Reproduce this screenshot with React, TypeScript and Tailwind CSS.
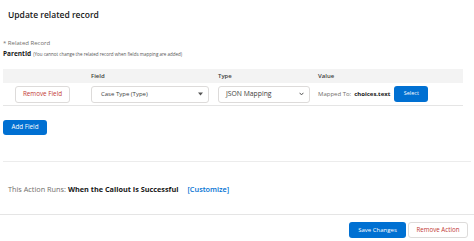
const blue = "bg-[#0070d2]";

function SelectBox({
  label,
  width,
  pad,
  size,
  chevron,
}: {
  label: string;
  width: string;
  pad: string;
  size: string;
  chevron: "triangle" | "chevron";
}) {
  return (
    <div
      className={`${width} ${pad} ${size} h-[17px] flex items-center justify-between border border-[#dddbda] rounded-[3px] bg-white pr-[5px] text-[#3e3e3c]`}
    >
      <span>{label}</span>
      {chevron === "triangle" ? (
        <svg width="5" height="4" viewBox="0 0 5 4">
          <path d="M0 0.5 L5 0.5 L2.5 3.5 Z" fill="#555" />
        </svg>
      ) : (
        <svg width="5" height="4" viewBox="0 0 5 4">
          <path d="M0.6 0.8 L2.5 2.9 L4.4 0.8" fill="none" stroke="#555" strokeWidth="1" />
        </svg>
      )}
    </div>
  );
}

export default function App() {
  return (
    <div
      className="w-[474px] h-[241px] bg-white overflow-hidden text-[#181818] leading-none"
      style={{ fontFamily: '"Open Sans", "Noto Sans", sans-serif' }}
    >
      {/* Header */}
      <div className="pt-[9px] pl-[8px] text-[8.5px] leading-[12px] font-semibold text-[#181818]">
        Update related record
      </div>

      <div className="mt-[18px] pl-[3px] text-[6px] leading-[8px] text-[#706e6b]">
        * Related Record
      </div>
      <div className="mt-[2px] pl-[3px] leading-[9px] flex items-baseline gap-[2px]">
        <span className="text-[6.5px] font-bold">ParentId</span>
        <span className="text-[4.5px] text-[#555]">(You cannot change the related record when fields mapping are added)</span>
      </div>

      {/* Mapping table */}
      <div className="mt-[10px] mx-[3px] w-[460px]">
        <div className="grid grid-cols-[87px_127px_101px_1fr] h-[14px] items-center bg-[#f3f3f3] text-[6px] font-semibold text-[#3e3e3c]">
          <span></span>
          <span className="pl-[1px]">Field</span>
          <span className="pl-[1px]">Type</span>
          <span>Value</span>
        </div>
        <div className="grid grid-cols-[87px_127px_101px_1fr] h-[23px] items-center border-b border-[#e5e5e5]">
          <div className="pl-[12px] flex">
            <button className="w-[55px] h-[17px] border border-[#dddbda] rounded-[3px] bg-white text-[6.3px] text-[#c23934]">
              Remove Field
            </button>
          </div>
          <div className="pl-[1px] flex">
            <SelectBox label="Case Type (Type)" width="w-[118px]" pad="pl-[9px]" size="text-[6px]" chevron="triangle" />
          </div>
          <div className="pl-[1px] flex">
            <SelectBox label="JSON Mapping" width="w-[92px]" pad="pl-[7px]" size="text-[6.8px]" chevron="chevron" />
          </div>
          <div className="flex items-center text-[6px]">
            <span className="text-[#706e6b]">Mapped To:</span>
            <span className="ml-[3px] font-bold text-[#181818]">choices.text</span>
            <button className={`ml-[4px] w-[34px] h-[16px] ${blue} rounded-[3px] text-white text-[5.5px]`}>
              Select
            </button>
          </div>
        </div>
      </div>

      <div className="mt-[14px] pl-[3px] flex">
        <button className={`w-[44px] h-[15px] ${blue} rounded-[3px] text-white text-[6.3px]`}>Add Field</button>
      </div>

      <div className="mt-[26px] mx-[3px] border-t border-[#ececec]"></div>

      {/* Run condition */}
      <div className="mt-[22px] pl-[8px] text-[7.3px] leading-[10px] flex items-center">
        <span className="text-[#706e6b]">This Action Runs:</span>
        <span className="ml-[2px] font-bold text-[#181818]">When the Callout Is Successful</span>
        <span className="ml-[9px] font-semibold text-[#0070d2]">[Customize]</span>
      </div>

      <div className="mt-[20px] border-t border-[#e5e5e5]"></div>

      {/* Footer */}
      <div className="mt-[7px] pr-[6px] flex justify-end gap-[2px]">
        <button className={`w-[57px] h-[16px] ${blue} rounded-[3px] text-white text-[6px]`}>Save Changes</button>
        <button className="w-[60px] h-[16px] border border-[#dddbda] rounded-[3px] bg-white text-[6.2px] text-[#c23934]">
          Remove Action
        </button>
      </div>
    </div>
  );
}
